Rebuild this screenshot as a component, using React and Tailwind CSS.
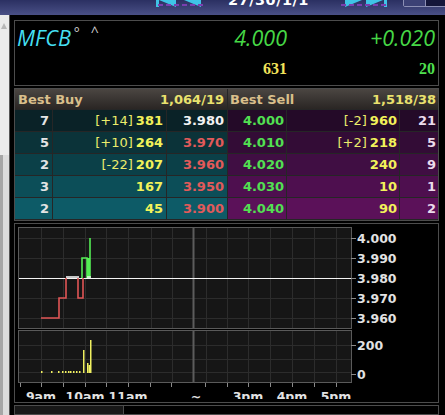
import React from 'react'

const buys = [
  { n: 7, chg: '+14', vol: 381, price: '3.980', pc: 'text-[#f2f2f2]', bg: 'bg-[#0a2227]' },
  { n: 5, chg: '+10', vol: 264, price: '3.970', pc: 'text-[#e25a5a]', bg: 'bg-[#0b3339]' },
  { n: 2, chg: '-22', vol: 207, price: '3.960', pc: 'text-[#e25a5a]', bg: 'bg-[#0b4048]' },
  { n: 3, chg: null, vol: 167, price: '3.950', pc: 'text-[#e25a5a]', bg: 'bg-[#0c4e58]' },
  { n: 2, chg: null, vol: 45, price: '3.900', pc: 'text-[#e25a5a]', bg: 'bg-[#0d5b67]' },
]

const sells = [
  { price: '4.000', chg: '-2', vol: 960, n: 21, bg: 'bg-[#240a28]' },
  { price: '4.010', chg: '+2', vol: 218, n: 5, bg: 'bg-[#330c36]' },
  { price: '4.020', chg: null, vol: 240, n: 9, bg: 'bg-[#400e43]' },
  { price: '4.030', chg: null, vol: 10, n: 1, bg: 'bg-[#4e0f4f]' },
  { price: '4.040', chg: null, vol: 90, n: 2, bg: 'bg-[#5b1159]' },
]

const vGrid = [26, 48, 70, 91, 113, 136, 157, 191, 212, 233, 255, 277, 299, 321]
const priceLabels = [
  { y: 14, t: '4.000' },
  { y: 34, t: '3.990' },
  { y: 54, t: '3.980' },
  { y: 74, t: '3.970' },
  { y: 94, t: '3.960' },
]
const volDots = [26, 36, 43, 47, 50, 53, 55, 58, 61, 64]
const timeLabels = [
  { x: 26, t: '9am' },
  { x: 70, t: '10am' },
  { x: 113, t: '11am' },
  { x: 181, t: '~' },
  { x: 233, t: '3pm' },
  { x: 277, t: '4pm' },
  { x: 321, t: '5pm' },
]
const bottomTicks = [5, 26, 48, 70, 91, 113, 135, 156, 190, 212, 233, 255, 277, 299, 321]

function Chart() {
  return (
    <svg width="422" height="175" className="block">
      {/* price panel */}
      <rect x="3.5" y="3.5" width="333" height="101" fill="#161616" stroke="#5a5a5a" />
      {vGrid.map(x => (
        <line key={'pv' + x} x1={x + 0.5} y1="4" x2={x + 0.5} y2="104" stroke="#2c2c2c" />
      ))}
      {priceLabels.map(l => (
        <line key={'ph' + l.y} x1="4" y1={l.y + 0.5} x2="336" y2={l.y + 0.5} stroke="#2c2c2c" />
      ))}
      <line x1="178.5" y1="4" x2="178.5" y2="104" stroke="#5c5c5c" strokeWidth="2" />
      <line x1="4" y1="54.5" x2="336" y2="54.5" stroke="#f4f4f4" />
      <polyline points="26,94 44,94 44,74 51,74 51,54" fill="none" stroke="#e05555" strokeWidth="1.6" />
      <polyline points="51,53 64,53" fill="none" stroke="#f4f4f4" strokeWidth="1.6" />
      <polyline points="63,54 63,74 68,74 68,54" fill="none" stroke="#e05555" strokeWidth="1.6" />
      <polyline points="67,54 67,34 72,34 72,54" fill="none" stroke="#55ee55" strokeWidth="1.6" />
      <rect x="72" y="34" width="3" height="20" fill="#55ee55" />
      <line x1="75" y1="14" x2="75" y2="54" stroke="#55ee55" strokeWidth="1.6" />
      <line x1="72" y1="53" x2="76" y2="53" stroke="#f4f4f4" strokeWidth="1.4" />
      {priceLabels.map(l => (
        <g key={'pl' + l.y}>
          <line x1="336" y1={l.y + 0.5} x2="341" y2={l.y + 0.5} stroke="#8a8a8a" />
          <text x="342" y={l.y + 4.7} fill="#e2e2e2" fontSize="12.5" fontWeight="bold" fontFamily="'DejaVu Sans', sans-serif">
            {l.t}
          </text>
        </g>
      ))}

      {/* volume panel */}
      <rect x="3.5" y="106.5" width="333" height="52" fill="#161616" stroke="#5a5a5a" />
      {vGrid.map(x => (
        <line key={'vv' + x} x1={x + 0.5} y1="107" x2={x + 0.5} y2="158" stroke="#2c2c2c" />
      ))}
      {[121, 135, 148].map(y => (
        <line key={'vh' + y} x1="4" y1={y + 0.5} x2="336" y2={y + 0.5} stroke="#2c2c2c" />
      ))}
      <line x1="178.5" y1="107" x2="178.5" y2="158" stroke="#5c5c5c" strokeWidth="2" />
      {volDots.map(x => (
        <rect key={'d' + x} x={x} y="147" width="1.5" height="2" fill="#f0f060" />
      ))}
      <rect x="68" y="126" width="1.5" height="23" fill="#f0f060" />
      <rect x="72" y="139" width="1.5" height="10" fill="#f0f060" />
      <rect x="73.5" y="141" width="1.5" height="8" fill="#f0f060" />
      <rect x="75" y="116" width="1.5" height="33" fill="#f0f060" />
      {[{ y: 121, t: '200' }, { y: 150, t: '0' }].map(l => (
        <g key={'vl' + l.y}>
          <line x1="336" y1={l.y + 0.5} x2="341" y2={l.y + 0.5} stroke="#8a8a8a" />
          <text x="342" y={l.y + 4.7} fill="#e2e2e2" fontSize="12.5" fontWeight="bold" fontFamily="'DejaVu Sans', sans-serif">
            {l.t}
          </text>
        </g>
      ))}
      {bottomTicks.map(x => (
        <line key={'bt' + x} x1={x + 0.5} y1="159" x2={x + 0.5} y2="163" stroke="#8a8a8a" />
      ))}
      {/* axis labels are clipped by the panel edge, as in the app */}
      {timeLabels.map(l => (
        <text key={l.t} x={l.x} y="177" textAnchor="middle" fill="#e2e2e2" fontSize="12.5" fontWeight="bold" fontFamily="'DejaVu Sans', sans-serif">
          {l.t}
        </text>
      ))}
    </svg>
  )
}

function Chg({ v }) {
  if (!v) return null
  return <span className="font-normal text-[#ecec6c] mr-[3px]">[{v}]</span>
}

export default function App() {
  return (
    <div className="w-[445px] h-[415px] overflow-hidden flex flex-col bg-black font-['DejaVu_Sans',sans-serif]">
      {/* top toolbar, mostly scrolled out of view */}
      <div className="h-[15px] shrink-0 overflow-hidden bg-linear-to-b from-[#2b3062] to-[#4a5086]">
        <div className="h-[7px] flex items-end">
          <svg width="52" height="14" className="ml-[156px] shrink-0">
            <rect x="0" y="0" width="3" height="14" fill="#3fc4e6" />
            <path d="M3 7 L20 0 L20 14 Z" fill="#3fc4e6" />
            <path d="M28 7 L45 0 L45 14 Z" fill="#3fc4e6" />
            <line x1="2" y1="12" x2="50" y2="12" stroke="#7a3fb0" strokeWidth="2" strokeDasharray="5 3" />
          </svg>
          <span className="ml-[20px] text-[14.5px] leading-none font-bold text-white tracking-[0.5px]">27/30/1/1</span>
          <svg width="52" height="14" className="ml-[32px] shrink-0">
            <path d="M25 0 L42 7 L25 14 Z" fill="#3fc4e6" />
            <path d="M0 0 L17 7 L0 14 Z" fill="#3fc4e6" transform="translate(4 0)" />
            <rect x="43" y="0" width="3" height="14" fill="#3fc4e6" />
            <line x1="0" y1="12" x2="48" y2="12" stroke="#7a3fb0" strokeWidth="2" strokeDasharray="5 3" />
          </svg>
          <div className="ml-[10px] w-[50px] h-[12px] shrink-0 flex border border-[#8c8fb4] rounded-[2px]">
            <div className="w-[21px] bg-[#3c4175]" />
            <div className="flex-1 bg-[#14163a] border-l border-[#8c8fb4]" />
          </div>
        </div>
      </div>

      <div className="flex-1 flex min-h-0">
        {/* left strip */}
        <div className="w-[10px] shrink-0 flex flex-col bg-[#ebebeb] border-r border-[#555]">
          <div className="h-[140px] relative">
            <svg width="6" height="6" className="absolute left-[1px] top-[8px]">
              <path d="M0 6 L3 0 L6 6 Z" fill="#b8b8b8" />
            </svg>
          </div>
          <div className="flex-1 flex">
            <div className="w-[3px] bg-[#a6a6a6]" />
            <div className="flex-1 bg-[#dcdcdc]" />
          </div>
        </div>

        <div className="flex-1 flex flex-col gap-[2px] pl-[4px] pr-[6px] pt-[5px]">
          {/* quote header */}
          <div className="h-[66px] shrink-0 border border-[#4c4c4c] flex flex-col">
            <div className="h-[34px] grid grid-cols-[213px_59px_1fr] items-center font-['Open_Sans',sans-serif] italic text-[21.5px] leading-none">
              <div className="flex items-center pl-[2px]">
                <span className="text-[#45dff2]">MFCB</span>
                <span className="ml-[3px] -mt-[8px] not-italic text-[14px] text-[#cfcfcf]">°</span>
                <span className="ml-[11px] -mt-[10px] not-italic text-[14px] text-[#cfcfcf]">^</span>
              </div>
              <div className="text-right text-[#46d846]">4.000</div>
              <div className="text-right pr-[3px] text-[#46d846]">+0.020</div>
            </div>
            <div className="h-[32px] grid grid-cols-[213px_59px_1fr] items-center font-['Liberation_Serif',serif] font-bold text-[16px] leading-none">
              <div />
              <div className="text-right text-[#f2e35a]">631</div>
              <div className="text-right pr-[3px] text-[#4fe04f]">20</div>
            </div>
          </div>

          {/* order book */}
          <div className="h-[133px] shrink-0 border border-[#4c4c4c] bg-[#262626] grid grid-cols-[37px_113px_60px_58px_112px_1fr] grid-rows-[20px_repeat(5,21px)] gap-px text-[13px] font-bold leading-none">
            <div className="col-span-3 flex items-center justify-between pl-[3px] pr-[3px] bg-linear-to-b from-[#4b4642] to-[#2a2624]">
              <span className="text-[#d9bf8b]">Best Buy</span>
              <span className="text-[#e9e16e]">1,064/19</span>
            </div>
            <div className="col-span-3 flex items-center justify-between pl-[2px] pr-[2px] bg-linear-to-b from-[#4b4642] to-[#2a2624]">
              <span className="text-[#d9bf8b]">Best Sell</span>
              <span className="text-[#e9e16e]">1,518/38</span>
            </div>
            {buys.map((b, i) => {
              const s = sells[i]
              return (
                <React.Fragment key={i}>
                  <div className={`${b.bg} flex items-center justify-end pr-[3px] text-[#e4e4e4]`}>{b.n}</div>
                  <div className={`${b.bg} flex items-center justify-end pr-[3px] text-[#f2f25a]`}>
                    <Chg v={b.chg} />
                    {b.vol}
                  </div>
                  <div className={`${b.bg} flex items-center justify-end pr-[3px] ${b.pc}`}>{b.price}</div>
                  <div className={`${s.bg} flex items-center justify-end pr-[2px] text-[#52e052]`}>{s.price}</div>
                  <div className={`${s.bg} flex items-center justify-end pr-[2px] text-[#f2f25a]`}>
                    <Chg v={s.chg} />
                    {s.vol}
                  </div>
                  <div className={`${s.bg} flex items-center justify-end pr-[2px] text-[#ecdcec]`}>{s.n}</div>
                </React.Fragment>
              )
            })}
          </div>

          {/* intraday chart */}
          <div className="h-[180px] shrink-0 border border-[#4c4c4c] overflow-hidden">
            <Chart />
          </div>

          {/* next panel */}
          <div className="flex-1 border border-[#4c4c4c] flex">
            <div className="w-[109px] bg-[#181818] border-r border-[#4c4c4c]" />
          </div>
        </div>
      </div>
    </div>
  )
}
